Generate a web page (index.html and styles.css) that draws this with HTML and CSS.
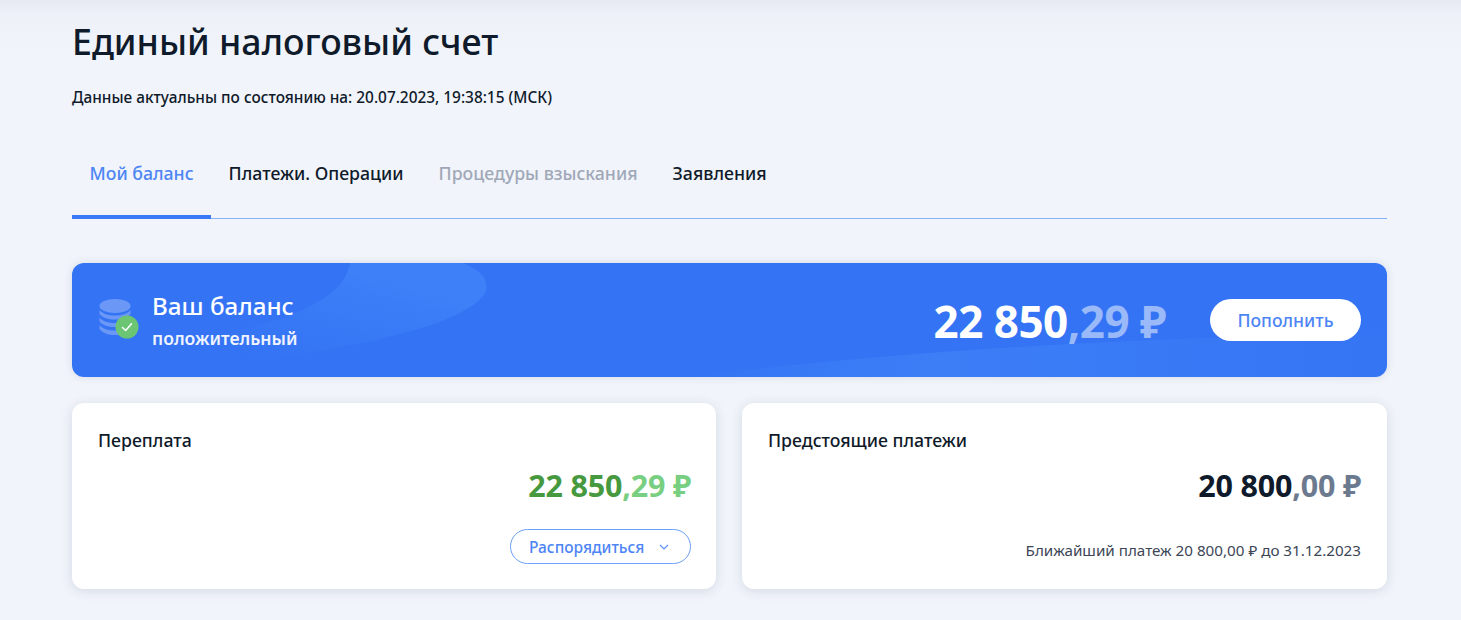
FILE: index.html
```html
<!DOCTYPE html>
<html lang="ru">
<head>
<meta charset="utf-8">
<title>Единый налоговый счет</title>
<link rel="stylesheet" href="styles.css">
</head>
<body>
<main class="page">
  <h1 class="title">Единый налоговый счет</h1>
  <p class="updated">Данные актуальны по состоянию на: 20.07.2023, 19:38:15 (МСК)</p>
  <nav class="tabs">
    <a class="tab tab-active">Мой баланс</a>
    <a class="tab">Платежи. Операции</a>
    <a class="tab tab-disabled">Процедуры взыскания</a>
    <a class="tab">Заявления</a>
  </nav>
  <section class="banner">
    <svg class="banner-bg" viewBox="0 0 1315 114" preserveAspectRatio="none" aria-hidden="true">
      <defs>
        <linearGradient id="waveLeft" x1="0" y1="1" x2="1" y2="0">
          <stop offset="0.3" stop-color="#3a7bf6" stop-opacity="0"/>
          <stop offset="0.8" stop-color="#3e80f8"/>
        </linearGradient>
        <linearGradient id="waveRight" x1="0" y1="0" x2="1" y2="0">
          <stop offset="0" stop-color="#3d7ef7" stop-opacity="0"/>
          <stop offset="0.35" stop-color="#3d7ef7"/>
          <stop offset="1" stop-color="#3a7af6" stop-opacity="0.2"/>
        </linearGradient>
      </defs>
      <path fill="url(#waveLeft)" d="M0 114V84C100 82 200 70 254 34C270 24 276 10 278 0H390C414 8 418 22 412 32C380 72 220 100 0 114Z"/>
      <path fill="url(#waveRight)" d="M620 114C800 90 1080 72 1315 72V114Z"/>
    </svg>
    <div class="banner-left">
      <svg class="coins" viewBox="0 0 40 42" aria-hidden="true">
        <ellipse class="coin" cx="16" cy="7" rx="15.500" ry="7"/>
        <path class="coin" d="M.5 11C4 15 9 16.500 16 16.500S28 15 31.500 11V15C28 19 23 20.500 16 20.500S4 19 .5 15Z"/>
        <path class="coin" d="M.5 18.500C4 22.500 9 24 16 24S28 22.500 31.500 18.500V22.500C28 26.500 23 28 16 28S4 26.500 .5 22.500Z"/>
        <path class="coin" d="M.5 26C4 30 9 31.500 16 31.500S28 30 31.500 26V30C28 34 23 36 16 36S4 34 .5 30Z"/>
        <circle class="badge" cx="28" cy="28" r="11.500"/>
        <path class="tick" d="M23.500 28.500L26.700 31.500L32.500 24.800"/>
      </svg>
      <div class="banner-text">
        <div class="banner-title">Ваш баланс</div>
        <div class="banner-sub">положительный</div>
      </div>
    </div>
    <div class="banner-right">
      <div class="banner-sum">22 850<span class="banner-cents">,29 ₽</span></div>
      <button class="topup">Пополнить</button>
    </div>
  </section>
  <div class="cards">
    <section class="card card-overpaid">
      <h2 class="card-title">Переплата</h2>
      <div class="amount amount-green">22 850<span class="cents-green">,29 ₽</span></div>
      <div class="card-foot">
        <button class="manage">Распорядиться
          <svg class="chevron" viewBox="0 0 10 6" aria-hidden="true"><path d="M1 1L5 5L9 1"/></svg>
        </button>
      </div>
    </section>
    <section class="card">
      <h2 class="card-title">Предстоящие платежи</h2>
      <div class="amount">20 800<span class="cents-grey">,00 ₽</span></div>
      <div class="card-foot">
        <p class="next">Ближайший платеж 20 800,00 ₽ до 31.12.2023</p>
      </div>
    </section>
  </div>
</main>
</body>
</html>
```
FILE: styles.css
```css
* { box-sizing: border-box; }
html, body { margin: 0; height: 100%; }
body {
  background: linear-gradient(180deg, #e6e9f1 0, #eef1f8 14px, #f1f4fa 60px);
  font-family: "Noto Sans", "Open Sans", sans-serif;
  color: #0f1a2a;
  overflow: hidden;
}
.page { padding: 18px 74px 0 72px; }
.title { margin: 0; font-size: 35.700px; line-height: 46px; font-weight: 500; }
.updated { margin: 23px 0 0; font-size: 15.400px; line-height: 22px; font-weight: 500; }
.tabs {
  display: flex;
  margin-top: 39px;
  height: 71px;
  border-bottom: 1px solid #86b0f8;
}
.tab {
  padding: 13px 17.500px 0;
  height: 71px;
  font-size: 17.700px;
  line-height: 24px;
  font-weight: 500;
  color: #0f1a2a;
}
.tab-active { color: #4d85f5; border-bottom: 4px solid #3a78f5; }
.tab-disabled { color: #a0a8b8; }
.banner {
  position: relative;
  display: flex;
  justify-content: space-between;
  align-items: center;
  margin-top: 44px;
  height: 114px;
  padding: 0 26px 0 27px;
  background: #3474f4;
  border-radius: 12px;
  overflow: hidden;
  box-shadow: 0 0 8px rgba(50, 70, 110, .14);
}
.banner-bg { position: absolute; inset: 0; width: 100%; height: 100%; }
.banner-left, .banner-right { position: relative; display: flex; align-items: center; }
.coins { width: 40px; height: 42px; margin-right: 13px; }
.coin { fill: #6b98f7; }
.badge { fill: #6cc573; }
.tick { fill: none; stroke: #fff; stroke-width: 1.500; stroke-linecap: round; stroke-linejoin: round; }
.banner-text { color: #fff; }
.banner-title { font-size: 24.200px; line-height: 30px; font-weight: 500; }
.banner-sub { margin-top: 6px; font-size: 17.600px; line-height: 22px; font-weight: 600; color: #eef3fe; }
.banner-sum { padding-top: 2px; font-size: 44px; line-height: 50px; font-weight: 700; color: #fff; letter-spacing: -.5px; }
.banner-cents { color: #9ab9f9; }
.topup {
  width: 151px;
  height: 42px;
  margin-left: 44px;
  border: 0;
  border-radius: 21px;
  background: #fff;
  color: #4d85f5;
  font: 500 17.600px "Noto Sans", sans-serif;
}
.cards { display: grid; grid-template-columns: 644px 1fr; gap: 26px; margin-top: 26px; }
.card {
  display: flex;
  flex-direction: column;
  height: 186px;
  padding: 26px 26px 25px;
  background: #fff;
  border-radius: 12px;
  box-shadow: 0 2px 12px rgba(50, 65, 100, .15);
}
.card-overpaid { padding-right: 25px; }
.card-title { margin: 0; font-size: 17.700px; line-height: 22px; font-weight: 500; }
.amount { margin-top: 13px; text-align: right; font-size: 30.500px; line-height: 42px; font-weight: 700; letter-spacing: -.2px; }
.amount-green { color: #47993f; }
.cents-green { color: #79cf81; }
.cents-grey { color: #6c7a8f; }
.card-foot { margin-top: auto; display: flex; justify-content: flex-end; align-items: center; min-height: 35px; }
.manage {
  display: flex;
  align-items: center;
  justify-content: space-between;
  width: 181px;
  height: 35px;
  padding: 0 21px 0 18px;
  border: 1px solid #6c9ff7;
  border-radius: 18px;
  background: #fff;
  color: #4d85f5;
  font: 500 15.500px "Noto Sans", sans-serif;
}
.chevron { width: 10px; height: 6px; fill: none; stroke: #5d8ef5; stroke-width: 1.200; }
.next { margin: 6px 0 0; font-size: 15.200px; line-height: 20px; color: #3c4656; }
```
